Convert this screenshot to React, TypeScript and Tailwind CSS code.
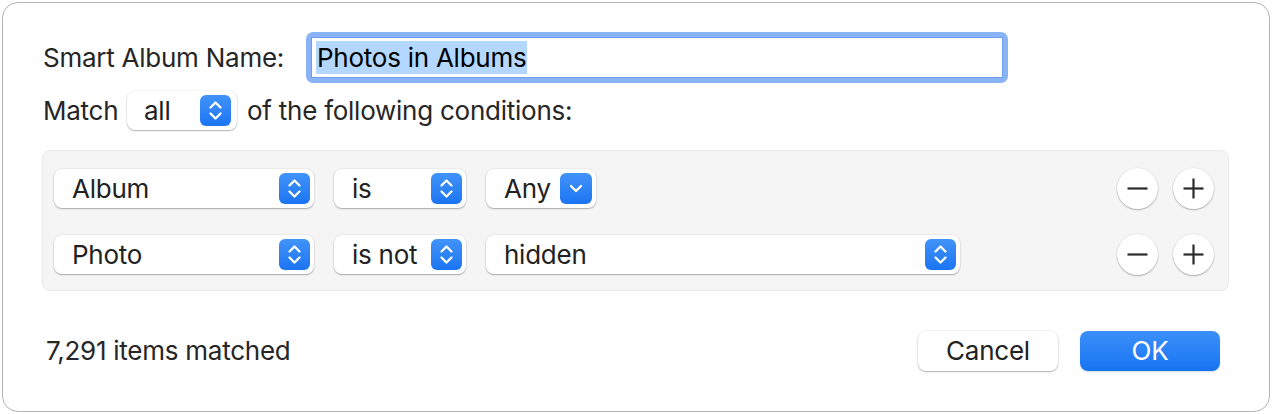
import React from "react";

const font = { fontFamily: "Inter, 'Noto Sans', 'Liberation Sans', sans-serif" };

function Stepper() {
  return (
    <div className="w-[31px] h-[31px] rounded-[6px] bg-gradient-to-b from-[#4193f9] to-[#1a74f2] flex items-center justify-center shrink-0">
      <svg width="31" height="31" viewBox="0 0 31 31" fill="none">
        <path d="M10.5 12.5 L15.5 7.5 L20.5 12.5" stroke="white" strokeWidth="2.3" strokeLinecap="round" strokeLinejoin="round" />
        <path d="M10.5 18.5 L15.5 23.5 L20.5 18.5" stroke="white" strokeWidth="2.3" strokeLinecap="round" strokeLinejoin="round" />
      </svg>
    </div>
  );
}

function DownBox() {
  return (
    <div className="w-[32px] h-[31px] rounded-[6px] bg-gradient-to-b from-[#4193f9] to-[#1a74f2] flex items-center justify-center shrink-0">
      <svg width="32" height="31" viewBox="0 0 32 31" fill="none">
        <path d="M11 13 L16 18 L21 13" stroke="white" strokeWidth="2.4" strokeLinecap="round" strokeLinejoin="round" />
      </svg>
    </div>
  );
}

function Popup({ label, width, down = false }: { label: string; width: string; down?: boolean }) {
  return (
    <div
      className={`${width} h-[39px] bg-white rounded-[8px] flex items-center justify-between pl-[18px] pr-[4px] shadow-[0_1px_1.5px_rgba(0,0,0,0.28),0_0_0_0.5px_rgba(0,0,0,0.08)] shrink-0`}
    >
      <span className="text-[26px] leading-none text-[#222]">{label}</span>
      {down ? <DownBox /> : <Stepper />}
    </div>
  );
}

function CircleBtn({ plus = false }: { plus?: boolean }) {
  return (
    <div className="w-[41px] h-[41px] rounded-full bg-white shadow-[0_1px_1.5px_rgba(0,0,0,0.28),0_0_0_0.5px_rgba(0,0,0,0.08)] flex items-center justify-center">
      <svg width="41" height="41" viewBox="0 0 41 41" fill="none">
        <path d="M10.5 20.5 H30.5" stroke="#2a2a2a" strokeWidth="2.2" />
        {plus && <path d="M20.5 10.5 V30.5" stroke="#2a2a2a" strokeWidth="2.2" />}
      </svg>
    </div>
  );
}

function ConditionRow({ a, b, c, cWidth, cDown }: { a: string; b: string; c: string; cWidth: string; cDown?: boolean }) {
  return (
    <div className="flex items-center h-[41px]">
      <div className="flex items-center gap-[20px] flex-1">
        <Popup label={a} width="w-[260px]" />
        <Popup label={b} width="w-[132px]" />
        <Popup label={c} width={cWidth} down={cDown} />
      </div>
      <div className="flex items-center gap-[15px]">
        <CircleBtn />
        <CircleBtn plus />
      </div>
    </div>
  );
}

export default function App() {
  return (
    <div className="w-[1272px] h-[414px] bg-white p-[2px] tracking-[-0.25px]" style={font}>
      <div className="w-[1268px] h-[410px] border border-[#b3b3b3] rounded-[16px] bg-white flex flex-col text-[#262626]">
        {/* Name row */}
        <div className="flex items-center mt-[29px] h-[51px] pl-[40px]">
          <span className="w-[263px] text-[26px] leading-none">Smart Album Name:</span>
          <div className="w-[702px] h-[51px] rounded-[7px] bg-[#8ab3f6] p-[5px]">
            <div className="w-full h-full bg-white border border-[#6e9de9] flex items-center pl-[4px]">
              <span className="bg-[#b3d7ff] text-black text-[26px] leading-[33px] h-[33px] px-[1px]">Photos in Albums</span>
            </div>
          </div>
        </div>

        {/* Match row */}
        <div className="flex items-center mt-[8px] h-[39px] pl-[40px]">
          <span className="w-[84px] text-[26px] leading-none">Match</span>
          <div className="w-[110px] h-[39px] bg-white rounded-[8px] flex items-center justify-between pl-[17px] pr-[6px] shadow-[0_1px_1.5px_rgba(0,0,0,0.28),0_0_0_0.5px_rgba(0,0,0,0.08)]">
            <span className="text-[26px] leading-none text-[#222]">all</span>
            <Stepper />
          </div>
          <span className="ml-[10px] text-[26px] leading-none">of the following conditions:</span>
        </div>

        {/* Conditions panel */}
        <div className="ml-[39px] mt-[20px] w-[1187px] h-[141px] bg-[#f5f5f5] border border-[#e9e9e9] rounded-[8px] pl-[11px] pr-[14px] pt-[17px] flex flex-col gap-[25px]">
          <ConditionRow a="Album" b="is" c="Any" cWidth="w-[110px]" cDown />
          <ConditionRow a="Photo" b="is not" c="hidden" cWidth="w-[474px]" />
        </div>

        {/* Bottom row */}
        <div className="flex items-center mt-[40px] h-[40px] pl-[43px] pr-[49px]">
          <span className="flex-1 text-[26px] leading-none">7,291 items matched</span>
          <div className="w-[140px] h-[40px] bg-white rounded-[8px] flex items-center justify-center shadow-[0_1px_1.5px_rgba(0,0,0,0.28),0_0_0_0.5px_rgba(0,0,0,0.1)]">
            <span className="text-[26px] leading-none text-[#222]">Cancel</span>
          </div>
          <div className="ml-[22px] w-[140px] h-[40px] rounded-[8px] flex items-center justify-center bg-gradient-to-b from-[#3b8ff8] to-[#1574f3] shadow-[0_1px_1.5px_rgba(0,0,0,0.15)]">
            <span className="text-[26px] leading-none text-white">OK</span>
          </div>
        </div>
      </div>
    </div>
  );
}
